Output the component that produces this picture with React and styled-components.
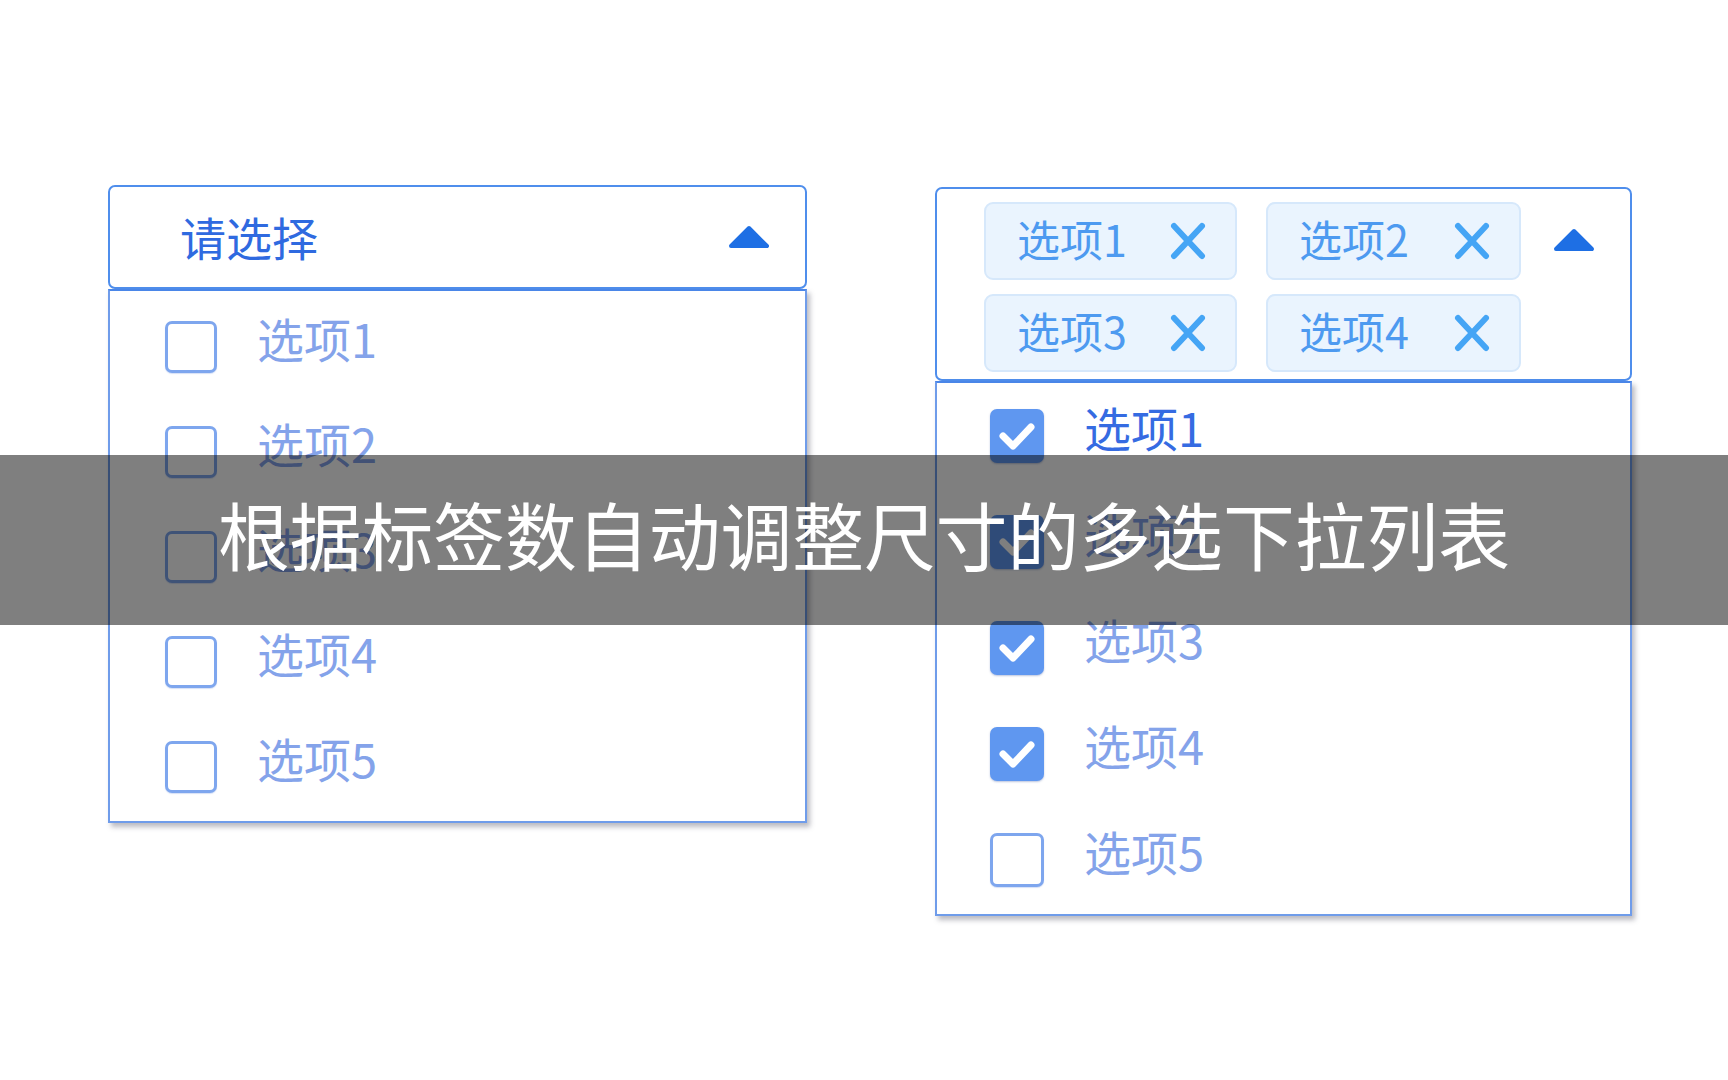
import React, { useState } from 'react';
import styled, { createGlobalStyle } from 'styled-components';

const GlobalStyle = createGlobalStyle`
  html, body {
    margin: 0;
    padding: 0;
    background: #ffffff;
  }
  body {
    font-family: "Noto Sans CJK SC", "Noto Sans", sans-serif;
  }
`;

const Page = styled.div`
  position: relative;
  width: 1728px;
  height: 1080px;
  overflow: hidden;
  background: #ffffff;
`;

const Columns = styled.div`
  display: flex;
  align-items: flex-start;
  gap: 128px;
  padding: 185px 0 0 108px;
`;

const Column = styled.div`
  display: flex;
  flex-direction: column;
  width: ${({ $width }) => $width}px;
  margin-top: ${({ $offset }) => $offset || 0}px;
`;

const SelectBox = styled.div`
  box-sizing: border-box;
  display: flex;
  align-items: ${({ $multi }) => ($multi ? 'flex-start' : 'center')};
  justify-content: space-between;
  height: ${({ $height }) => $height}px;
  border: 2px solid #4f8eec;
  border-radius: 7px;
  background: #ffffff;
  padding: ${({ $multi }) => ($multi ? '13px 35px 0 47px' : '0 35px 0 70px')};
`;

const Placeholder = styled.span`
  font-size: 46px;
  line-height: 1;
  color: #2f6ae0;
  margin-top: -3px;
`;

const TagGrid = styled.div`
  display: grid;
  grid-template-columns: 253px 255px;
  column-gap: 29px;
  row-gap: 14px;
`;

const Tag = styled.div`
  box-sizing: border-box;
  height: 78px;
  display: flex;
  align-items: center;
  justify-content: space-between;
  padding: 0 28px 0 31px;
  background: #eaf4fe;
  border: 2px solid #d6e8fb;
  border-radius: 9px;
`;

const TagText = styled.span`
  font-size: 43px;
  line-height: 1;
  color: #4d9af0;
  margin-top: -6px;
`;

const Arrow = styled.svg`
  flex-shrink: 0;
  margin-top: ${({ $top }) => $top || 0}px;
`;

const Dropdown = styled.div`
  box-sizing: border-box;
  height: ${({ $height }) => $height}px;
  border: 2px solid #6f9cea;
  border-top-color: #4a86e8;
  background: #ffffff;
  box-shadow: 3px 4px 5px rgba(60, 60, 80, 0.35);
  padding: ${({ $pad }) => $pad}px 0 0 0;
  display: flex;
  flex-direction: column;
`;

const Row = styled.div`
  display: flex;
  align-items: center;
  gap: 40px;
  height: ${({ $height }) => $height}px;
  padding-left: ${({ $indent }) => $indent}px;
`;

const Box = styled.div`
  box-sizing: border-box;
  width: ${({ $size }) => $size}px;
  height: ${({ $size }) => $size}px;
  border-radius: 7px;
  display: flex;
  align-items: center;
  justify-content: center;
  flex-shrink: 0;
  background: ${({ $checked }) => ($checked ? '#5f97f0' : '#ffffff')};
  border: ${({ $checked }) => ($checked ? 'none' : '3px solid #7ea6ee')};
  box-shadow: ${({ $checked }) => ($checked ? '0 1px 2px rgba(60, 90, 160, 0.35)' : '0 1px 1px rgba(90, 130, 220, 0.25)')};
`;

const OptionText = styled.span`
  font-size: 47px;
  line-height: 1;
  margin-top: -19px;
  color: ${({ $active }) => ($active ? '#356be2' : '#84a3ea')};
`;

const Banner = styled.div`
  position: absolute;
  left: 0;
  right: 0;
  top: 455px;
  height: 170px;
  background: rgba(0, 0, 0, 0.5);
  display: flex;
  align-items: center;
  justify-content: center;
`;

const BannerText = styled.span`
  display: inline-block;
  font-size: 74px;
  line-height: 1;
  color: #ffffff;
  white-space: nowrap;
  transform: scaleX(0.97);
  margin-top: -15px;
`;

const UpArrow = ({ top }) => (
  <Arrow $top={top} width="42" height="25" viewBox="0 0 42 25">
    <path d="M21 3 L39 21 L3 21 Z" fill="#1e6fe4" stroke="#1e6fe4" strokeWidth="4" strokeLinejoin="round" />
  </Arrow>
);

const CloseIcon = () => (
  <svg width="38" height="38" viewBox="0 0 38 38">
    <path d="M5 4 L33 34 M33 4 L5 34" stroke="#45a5f5" strokeWidth="6" strokeLinecap="round" />
  </svg>
);

const CheckIcon = () => (
  <svg width="38" height="30" viewBox="0 0 38 30">
    <path d="M5 15 L15 25 L33 6" fill="none" stroke="#ffffff" strokeWidth="7" strokeLinecap="round" strokeLinejoin="round" />
  </svg>
);

const options = ['选项1', '选项2', '选项3', '选项4', '选项5'];

function App() {
  const [selected] = useState(['选项1', '选项2', '选项3', '选项4']);

  return (
    <Page>
      <GlobalStyle />
      <Columns>
        {/* single placeholder select */}
        <Column $width={699}>
          <SelectBox $height={104}>
            <Placeholder>请选择</Placeholder>
            <UpArrow top={0} />
          </SelectBox>
          <Dropdown $height={534} $pad={3}>
            {options.map(opt => (
              <Row key={opt} $height={105} $indent={55}>
                <Box $size={52} />
                <OptionText>{opt}</OptionText>
              </Row>
            ))}
          </Dropdown>
        </Column>

        {/* multi select with tags */}
        <Column $width={697} $offset={2}>
          <SelectBox $multi $height={194}>
            <TagGrid>
              {selected.map(tag => (
                <Tag key={tag}>
                  <TagText>{tag}</TagText>
                  <CloseIcon />
                </Tag>
              ))}
            </TagGrid>
            <UpArrow top={26} />
          </SelectBox>
          <Dropdown $height={535} $pad={0}>
            {options.map((opt, i) => (
              <Row key={opt} $height={106} $indent={53}>
                <Box $size={54} $checked={selected.includes(opt)}>
                  {selected.includes(opt) && <CheckIcon />}
                </Box>
                <OptionText $active={i === 0}>{opt}</OptionText>
              </Row>
            ))}
          </Dropdown>
        </Column>
      </Columns>

      <Banner>
        <BannerText>根据标签数自动调整尺寸的多选下拉列表</BannerText>
      </Banner>
    </Page>
  );
}

export default App;
